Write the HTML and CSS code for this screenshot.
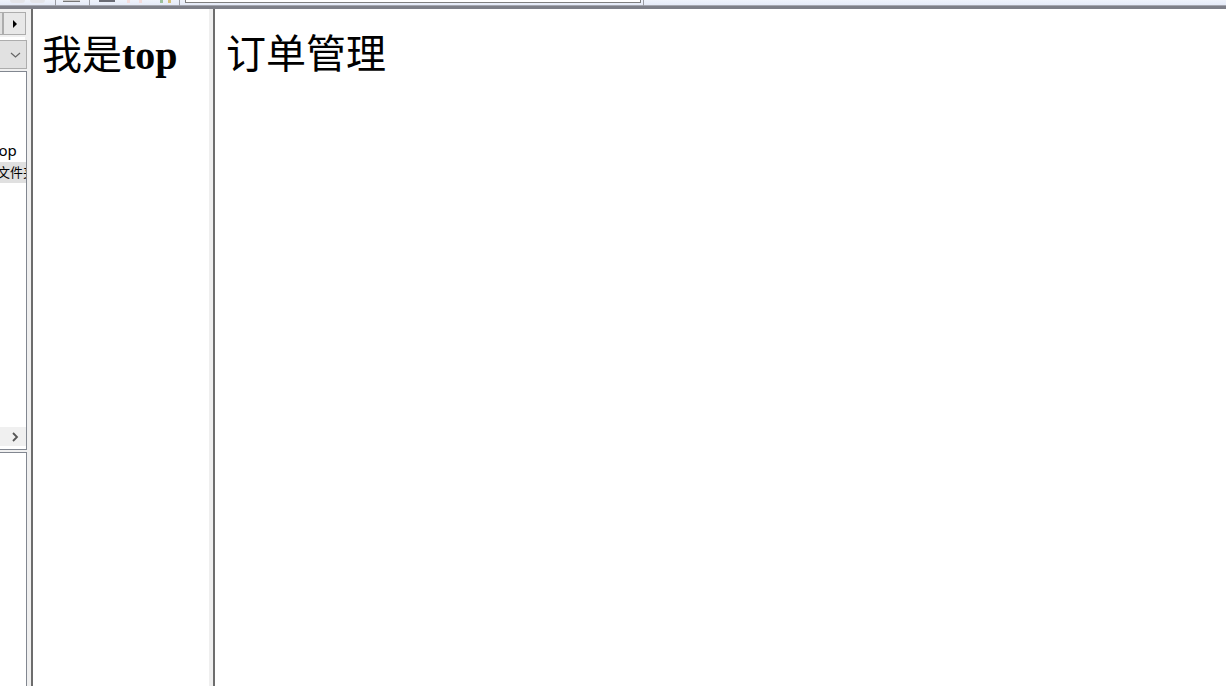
FILE: index.html

```html
<!DOCTYPE html>
<html lang="zh-CN">
<head>
  <meta charset="UTF-8" />
  <title>订单管理</title>
  <link rel="stylesheet" href="styles.css">
</head>
<body>
  <div class="toolbar">
    <span class="round-btn"></span>
    <span class="round-btn"></span>
    <span class="sep first-sep"></span>
    <span class="tool-icon"></span>
    <span class="sep"></span>
    <span class="tool-icon dark"></span>
    <span class="dots">
      <i class="pink"></i><i class="pink"></i><i class="green"></i><i class="gold"></i>
    </span>
    <span class="sep"></span>
    <span class="address"></span>
    <span class="sep"></span>
  </div>

  <div class="workspace">
    <div class="side">
      <div class="tabs">
        <span class="tab-blank"></span>
        <span class="tab-next">
          <svg width="6" height="8" viewBox="0 0 6 8"><path d="M1 0l4 4-4 4z" fill="#000"/></svg>
        </span>
      </div>
      <div class="tab-strip"></div>
      <div class="combo">
        <svg width="11" height="6" viewBox="0 0 11 6"><path d="M1 1l4.500 4 4.500-4" fill="none" stroke="#666" stroke-width="1.2"/></svg>
      </div>
      <div class="tree">
        <div class="tree-rows">
          <div class="tree-row">top</div>
          <div class="tree-row selected">文件夹</div>
        </div>
        <div class="hscroll">
          <svg width="8" height="10" viewBox="0 0 8 10"><path d="M2 1l4 4-4 4" fill="none" stroke="#555" stroke-width="1.8"/></svg>
        </div>
      </div>
      <div class="lower"></div>
    </div>

    <div class="frame top-frame">
      <h1 class="frame-title"><span class="cjk">我是</span>top</h1>
    </div>
    <div class="frame main-frame">
      <h1 class="frame-title plain">订单管理</h1>
    </div>
  </div>
</body>
</html>
```

FILE: styles.css

```css
* {
  box-sizing: border-box;
}
html, body {
  height: 100%;
}
body {
  margin: 0;
  display: flex;
  flex-direction: column;
  overflow: hidden;
  background-color: #fff;
  font-family: "Liberation Serif", "Noto Sans CJK SC", serif;
}

.toolbar {
  display: flex;
  align-items: flex-start;
  flex: none;
  height: 9px;
  padding-left: 10px;
  background: linear-gradient(#eef2fb, #e3e9f7);
  border-bottom: 3px solid #7d7f88;
  box-shadow: inset 0 -1px 0 #a5a7b0;
}
.round-btn {
  width: 15px;
  height: 3px;
  margin-right: 5px;
  background-color: #e4e5ea;
  border-radius: 0 0 8px 8px;
}
.sep {
  width: 1px;
  height: 6px;
  background-color: #9a9ca3;
}
.first-sep {
  margin-left: 5px;
}
.tool-icon {
  width: 17px;
  height: 2px;
  margin: 0 9px 0 7px;
  background-color: #c9c9c9;
  border-bottom: 1px solid #777;
}
.tool-icon.dark {
  width: 16px;
  margin: 0 0 0 9px;
  background-color: #6a6c75;
  border: 0;
}
.dots {
  display: flex;
  width: 52px;
  margin-left: 12px;
}
.dots i {
  width: 3px;
  height: 3px;
}
.dots .pink {
  margin-right: 9px;
  background-color: #f3dcdc;
}
.dots .green {
  margin: 0 5px 0 9px;
  background-color: #9cc09c;
}
.dots .gold {
  background-color: #d8c27a;
}
.address {
  width: 456px;
  height: 3px;
  margin: 0 2px 0 5px;
  background-color: #fff;
  border: 1px solid #7f7f7f;
  border-top: 0;
}

.workspace {
  display: flex;
  flex: 1;
  min-height: 0;
}

.side {
  display: flex;
  flex-direction: column;
  flex: none;
  width: 33px;
  padding-top: 3px;
  background-color: #f0f0f0;
  border-right: 2px solid #6d6d6d;
  overflow: hidden;
}
.tabs {
  display: flex;
  height: 23px;
  margin-right: 5px;
}
.tab-blank {
  width: 3px;
  background-color: #e1e1e1;
  border: 1px solid #adadad;
  border-left: 0;
}
.tab-next {
  display: flex;
  align-items: center;
  justify-content: center;
  flex: 1;
  background-color: #e8e8e8;
  border: 1px solid #adadad;
}
.tab-strip {
  height: 3px;
  margin: 2px 6px 0 0;
  background-color: #fff;
}
.combo {
  display: flex;
  align-items: center;
  justify-content: flex-end;
  height: 29px;
  margin-right: 4px;
  padding-right: 5px;
  background-color: #e1e1e1;
  border: 1px solid #adadad;
  border-left: 0;
}
.tree {
  display: flex;
  flex-direction: column;
  height: 379px;
  margin: 2px 4px 0 0;
  background-color: #fff;
  border: 1px solid #828790;
  border-left: 0;
}
.tree-rows {
  flex: 1;
  padding-top: 69px;
  overflow: hidden;
}
.tree-row {
  height: 21px;
  margin-left: -7px;
  font-family: "Noto Sans", "Noto Sans CJK SC", sans-serif;
  font-size: 15px;
  line-height: 19px;
  white-space: nowrap;
}
.tree-row.selected {
  margin-left: 0;
  text-indent: -3px;
  background-color: #e0e0e0;
  font-size: 13px;
  line-height: 21px;
}
.hscroll {
  display: flex;
  align-items: center;
  justify-content: center;
  height: 19px;
  margin-bottom: 3px;
  padding-left: 3px;
  background-color: #f0f0f0;
}
.lower {
  flex: 1;
  margin: 2px 4px 0 0;
  background-color: #fff;
  border: 1px solid #828790;
  border-left: 0;
  border-bottom: 0;
}

.frame {
  background-color: #fff;
}
.top-frame {
  flex: none;
  width: 180px;
  border-right: 4px solid #efefef;
}
.main-frame {
  flex: 1;
  border-left: 2px solid #6d6d6d;
}
.frame-title {
  margin: 24px 0 0 9px;
  font-size: 40px;
  line-height: 46px;
  color: #000;
  white-space: nowrap;
}
.frame-title .cjk {
  font-weight: 400;
}
.frame-title.plain {
  margin: 23px 0 0 11px;
  font-weight: 400;
}
```
